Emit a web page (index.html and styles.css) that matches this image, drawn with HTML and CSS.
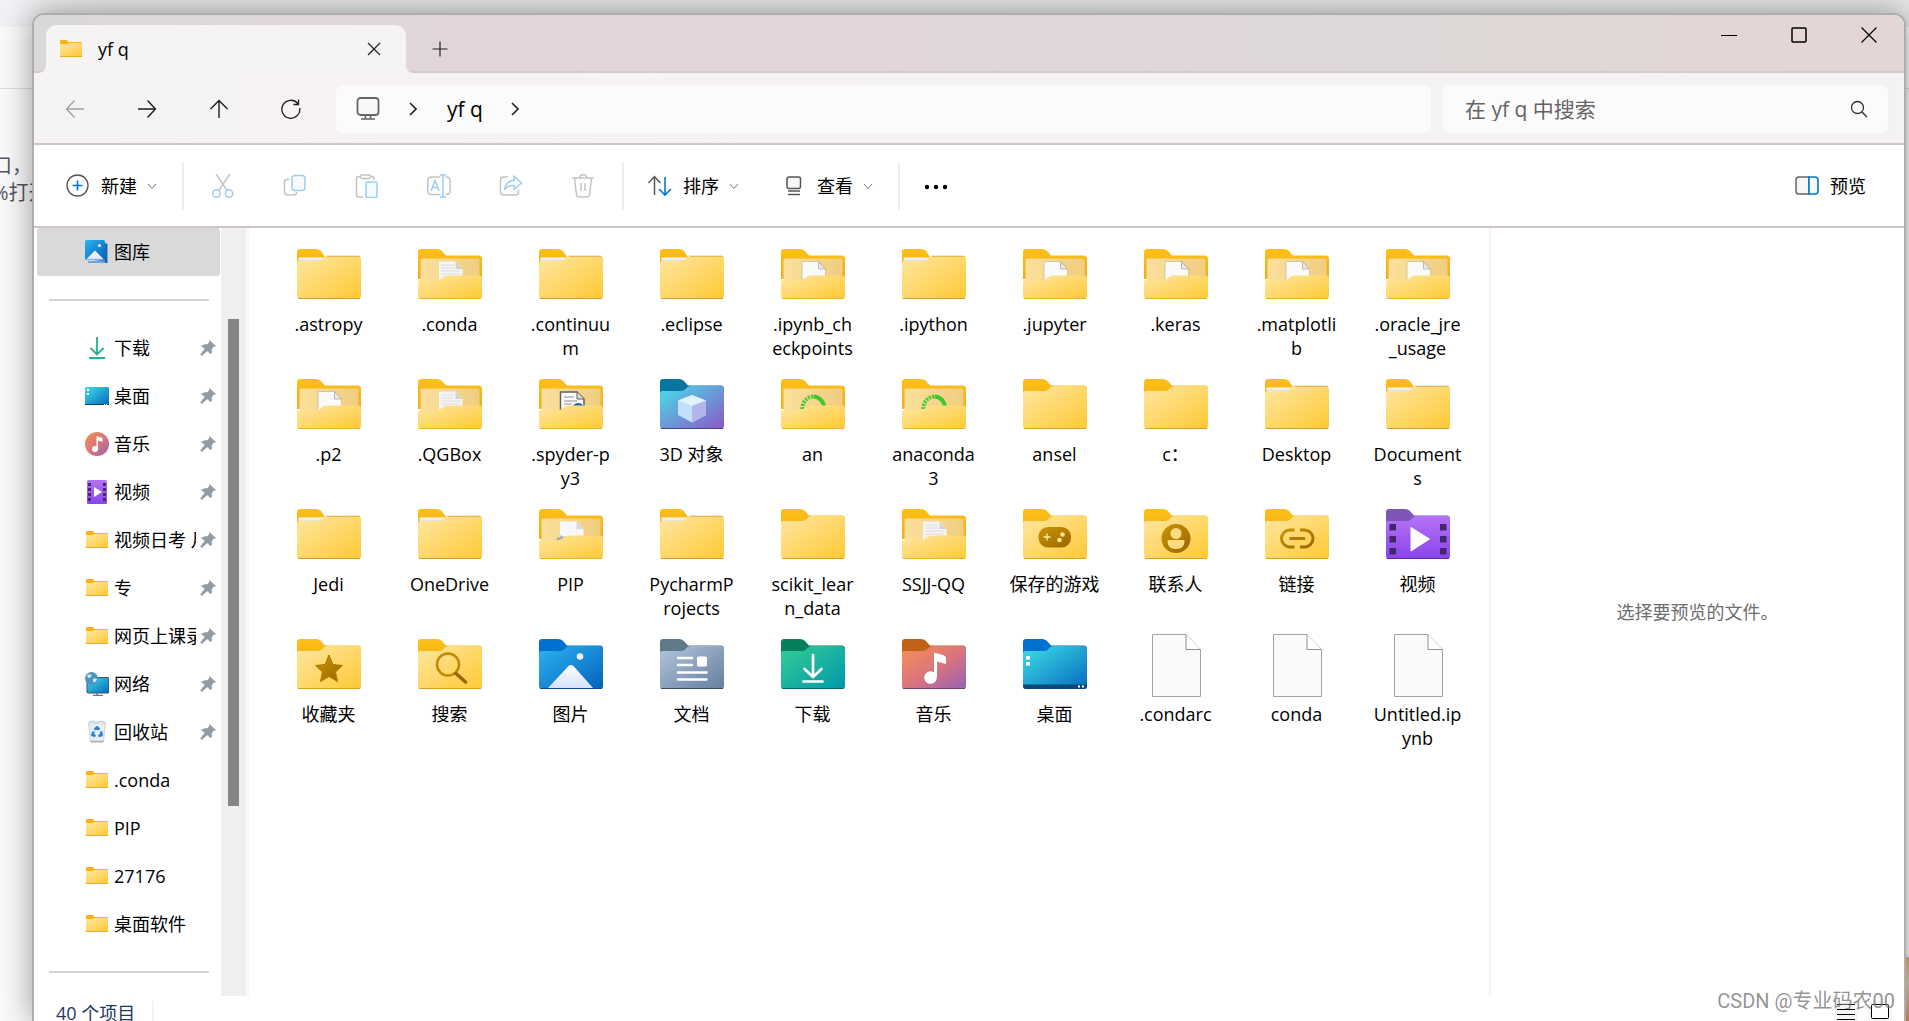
FILE: index.html
```html
<!DOCTYPE html>
<html lang="zh-CN">
<head>
    <meta charset="UTF-8">
    <meta name="viewport" content="width=device-width, initial-scale=1.0">
    <title>yf q</title>
    <link rel="stylesheet" href="styles.css">
</head>
<body>
    <!-- shared gradients and icons -->
    <svg class="defs" aria-hidden="true">
        <defs>
            <linearGradient id="gFront" x1="0" y1="0" x2="1" y2="1"><stop offset="0" stop-color="#ffe7a2"/><stop offset="1" stop-color="#ffc934"/></linearGradient>
            <linearGradient id="gTab" x1="0" y1="0" x2="0" y2="1"><stop offset="0" stop-color="#fdc016"/><stop offset="1" stop-color="#f0ae1c"/></linearGradient>
            <linearGradient id="gInner" x1="0" y1="0" x2="1" y2="0"><stop offset="0" stop-color="#fbe09c"/><stop offset="1" stop-color="#f0cd80"/></linearGradient>
            <linearGradient id="gGold" x1="0" y1="0" x2="1" y2="1"><stop offset="0" stop-color="#c99700"/><stop offset="1" stop-color="#9d6400"/></linearGradient>
            <linearGradient id="g3d" x1="0" y1="0" x2="1" y2="1"><stop offset="0" stop-color="#45e0e8"/><stop offset=".5" stop-color="#6a9ad8"/><stop offset="1" stop-color="#8b57c6"/></linearGradient>
            <linearGradient id="gPic" x1="0" y1="0" x2="1" y2="1"><stop offset="0" stop-color="#2cb4f2"/><stop offset="1" stop-color="#0460ba"/></linearGradient>
            <linearGradient id="gHill" x1="0" y1="0" x2="0" y2="1"><stop offset="0" stop-color="#ffffff"/><stop offset="1" stop-color="#d6e0fb"/></linearGradient>
            <linearGradient id="gDoc" x1="0" y1="0" x2="1" y2="1"><stop offset="0" stop-color="#b3c5dc"/><stop offset="1" stop-color="#647f9f"/></linearGradient>
            <linearGradient id="gDown" x1="0" y1="0" x2="1" y2="1"><stop offset="0" stop-color="#34cd94"/><stop offset="1" stop-color="#0098ab"/></linearGradient>
            <linearGradient id="gMusic" x1="0" y1="0" x2="1" y2="1"><stop offset="0" stop-color="#fb8f55"/><stop offset=".55" stop-color="#d6737f"/><stop offset="1" stop-color="#9462b8"/></linearGradient>
            <linearGradient id="gDesk" x1="0" y1="0" x2="1" y2="1"><stop offset="0" stop-color="#3ce0e6"/><stop offset="1" stop-color="#0769c0"/></linearGradient>
            <linearGradient id="gVideo" x1="0" y1="0" x2="0" y2="1"><stop offset="0" stop-color="#b673f5"/><stop offset="1" stop-color="#8844ea"/></linearGradient>
            <linearGradient id="gPaper" x1="0" y1="0" x2="0" y2="1"><stop offset="0" stop-color="#fbfbfb"/><stop offset="1" stop-color="#d9d9d9"/></linearGradient>

            <path id="front" d="M0 14Q0 12 2 12H21Q24 12 26 9.500Q27.500 7 31 7H61Q64 7 64 10V47Q64 50 61 50H3Q0 50 0 47Z"/>
            <path id="tab" d="M0 3Q0 0 3 0H19Q22 0 24 2L28 6.500H61Q64 6.500 64 10V30H0Z"/>

            <symbol id="plain" viewBox="0 0 64 64">
                <g transform="translate(0 5)">
                    <use href="#tab" fill="url(#gTab)"/>
                    <use href="#front" fill="url(#gFront)"/>
                    <path d="M1 49.500H63" stroke="#d99f25"/>
                </g>
            </symbol>
            <symbol id="filled" viewBox="0 0 64 64">
                <g transform="translate(0 5)">
                    <path d="M0 3Q0 0 3 0H19Q22 0 24 2L28 8V20H0Z" fill="url(#gTab)"/>
                    <path d="M28 7L30 6H62V9H28Z" fill="#e6e6ea"/>
                    <path d="M1.500 9.500Q1.500 8.500 3 8.500H28L25 13H1.500Z" fill="url(#gPaper)"/>
                    <use href="#front" fill="url(#gFront)"/>
                    <path d="M30 7.500H63" stroke="#e5b954"/>
                    <path d="M1 49.500H63" stroke="#cf9a2c"/>
                </g>
            </symbol>
            <symbol id="openBack" viewBox="0 0 64 64">
                <g transform="translate(0 5)">
                    <use href="#tab" fill="url(#gTab)"/>
                    <path d="M2.500 11Q2.500 9.500 4 9.500H60Q61.500 9.500 61.500 11V40H2.500Z" fill="url(#gInner)"/>
                </g>
            </symbol>
            <symbol id="openFront" viewBox="0 0 64 64">
                <g transform="translate(0 5)">
                    <path d="M0 33Q0 31 2 31H19Q22 31 24.500 28.500Q27 26.500 30 26.500H62Q64 26.500 64 29V47Q64 50 61 50H3Q0 50 0 47Z" fill="url(#gFront)"/>
                    <path d="M1 49.500H63" stroke="#eeb02b"/>
                </g>
            </symbol>
            <symbol id="openBlank" viewBox="0 0 64 64">
                <use href="#openBack"/>
                <path d="M21 17.500H37.500L44.500 25V37H21Z" fill="#fafafa" stroke="#d9c699"/>
                <path d="M37.500 17.500V25H44.500Z" fill="#e9e9e9" stroke="#a8a090" stroke-width=".7"/>
                <use href="#openFront"/>
            </symbol>
            <symbol id="openText" viewBox="0 0 64 64">
                <use href="#openBack"/>
                <path d="M21 17.500H37.500L44.500 25V37H21Z" fill="#f5f5f5"/>
                <path d="M37.500 17.500V25H44.500Z" fill="#d3d3d3"/>
                <path d="M23 21H36M23 24H36M23 27H42M23 30H42" stroke="#dcdcdc"/>
                <use href="#openFront"/>
            </symbol>
            <symbol id="openSpyder" viewBox="0 0 64 64">
                <use href="#openBack"/>
                <path d="M21.500 18H38L45 25V37H21.500Z" fill="#fbfbfb" stroke="#5f5f5f" stroke-width="1.500"/>
                <path d="M38 18V25H45" fill="#ddd" stroke="#5f5f5f"/>
                <path d="M25 23H35M25 27H38M25 30H33" stroke="#8c8c8c"/>
                <path d="M33 34Q35 28.500 40 29Q44 29.500 45 34Z" fill="#2a6aa8"/>
                <use href="#openFront"/>
            </symbol>
            <symbol id="openPip" viewBox="0 0 64 64">
                <use href="#openBack"/>
                <path d="M21 17.500H37.500L44.500 25V37H21Z" fill="#f6f8fb"/>
                <path d="M37.500 17.500V25H44.500Z" fill="#d5d9df"/>
                <path d="M17 36L19 33L21 34L22 31L24 33L27 32V36Z" fill="#9aaabb"/>
                <use href="#openFront"/>
            </symbol>
            <symbol id="openConda" viewBox="0 0 64 64">
                <use href="#openBack"/>
                <path d="M32.500 22.500A11 11 0 0 1 43 33" fill="none" stroke="#3fc92c" stroke-width="4"/>
                <path d="M21.500 35A11.500 11.500 0 0 1 32 22.500" fill="none" stroke="#43cd30" stroke-width="4" stroke-dasharray="2 1.200"/>
                <use href="#openFront"/>
            </symbol>
            <symbol id="star" viewBox="0 0 64 64">
                <use href="#plain"/>
                <path d="M32 21L36 30.500L45.500 31.500L38.500 38L40.500 47.500L32 42.500L23.500 47.500L25.500 38L18.500 31.500L28 30.500Z" fill="url(#gGold)" stroke="#b07a00" stroke-linejoin="round"/>
            </symbol>
            <symbol id="lens" viewBox="0 0 64 64">
                <use href="#plain"/>
                <circle cx="30" cy="30.500" r="11" fill="none" stroke="#bd8a00" stroke-width="2.500"/>
                <path d="M38 39.500L47.500 48" stroke="#9d6400" stroke-width="3.500" stroke-linecap="round"/>
            </symbol>
            <symbol id="game" viewBox="0 0 64 64">
                <use href="#plain"/>
                <rect x="15.500" y="23" width="32.500" height="20.500" rx="9.500" fill="url(#gGold)"/>
                <path d="M24 29.500V36.500M20.500 33H27.500" stroke="#ffe9ab" stroke-width="1.300"/>
                <circle cx="39.500" cy="30.500" r="2.300" fill="#ffe49a"/>
                <circle cx="36.500" cy="36" r="2.300" fill="#ffe49a"/>
            </symbol>
            <symbol id="person" viewBox="0 0 64 64">
                <use href="#plain"/>
                <circle cx="32" cy="34.500" r="14.500" fill="url(#gGold)"/>
                <circle cx="32" cy="29.500" r="5.500" fill="#ffdc80"/>
                <path d="M23.500 36H40.500Q41 45 32 45Q23 45 23.500 36Z" fill="#ffdc80"/>
            </symbol>
            <symbol id="link" viewBox="0 0 64 64">
                <use href="#plain"/>
                <path d="M29.500 26H25A8.500 8.500 0 0 0 25 43H29.500M35 26H39.500A8.500 8.500 0 0 1 39.500 43H35" fill="none" stroke="url(#gGold)" stroke-width="3"/>
                <path d="M25.500 34.500H39" stroke="#b37e00" stroke-width="3" stroke-linecap="round"/>
            </symbol>
            <symbol id="cube" viewBox="0 0 64 64">
                <g transform="translate(0 5)">
                    <use href="#tab" fill="#08749f"/>
                    <use href="#front" fill="url(#g3d)"/>
                    <path d="M1 49.500H63" stroke="#40408c"/>
                </g>
                <path d="M32 21L46 26.500V41L32 48.500L18 41V26.500Z" fill="#bfe0f6"/>
                <path d="M32 21L46 26.500L32 32L18 26.500Z" fill="#e2f1fb"/>
                <path d="M32 32L46 26.500V41L32 48.500Z" fill="#b4b3ee"/>
            </symbol>
            <symbol id="videos" viewBox="0 0 64 64">
                <g transform="translate(0 5)">
                    <use href="#tab" fill="#7f56b8"/>
                    <use href="#front" fill="url(#gVideo)"/>
                    <path d="M1 49.500H63" stroke="#5d2ba6"/>
                </g>
                <path d="M3.500 20h6.500v6.500h-6.500zM3.500 32h6.500v6.500h-6.500zM3.500 44h6.500v6.500h-6.500zM54 20h6.500v6.500h-6.500zM54 32h6.500v6.500h-6.500zM54 44h6.500v6.500h-6.500z" fill="#43276e"/>
                <path d="M25 23.500L43.500 35L25 47Z" fill="#fff" stroke="#fff" stroke-linejoin="round"/>
            </symbol>
            <symbol id="pictures" viewBox="0 0 64 64">
                <g transform="translate(0 5)">
                    <use href="#tab" fill="#0270cf"/>
                    <use href="#front" fill="url(#gPic)"/>
                    <path d="M9 49L29.500 27Q32 25 34.500 27L54 49Z" fill="url(#gHill)"/>
                    <circle cx="41" cy="17.500" r="3.300" fill="#f0eef2"/>
                    <path d="M1 49.500H63" stroke="#064a92"/>
                </g>
            </symbol>
            <symbol id="docs" viewBox="0 0 64 64">
                <g transform="translate(0 5)">
                    <use href="#tab" fill="#607b88"/>
                    <use href="#front" fill="url(#gDoc)"/>
                    <path d="M1 49.500H63" stroke="#3e5068"/>
                </g>
                <path d="M18 24H32M18 31H32M18 38.500H46.500M18 45.500H46.500" stroke="#fff" stroke-width="2.500" stroke-linecap="round"/>
                <rect x="37" y="22.500" width="10" height="10" rx="1.500" fill="#fff"/>
            </symbol>
            <symbol id="downloads" viewBox="0 0 64 64">
                <g transform="translate(0 5)">
                    <use href="#tab" fill="#04805d"/>
                    <use href="#front" fill="url(#gDown)"/>
                    <path d="M1 49.500H63" stroke="#056a72"/>
                </g>
                <path d="M32 21V42M23.500 35L32 43L40.500 35M22.500 47.500H41.500" fill="none" stroke="#fff" stroke-width="2.700" stroke-linecap="round"/>
            </symbol>
            <symbol id="music" viewBox="0 0 64 64">
                <g transform="translate(0 5)">
                    <use href="#tab" fill="#c06316"/>
                    <use href="#front" fill="url(#gMusic)"/>
                    <path d="M1 49.500H63" stroke="#74406f"/>
                </g>
                <path d="M32 18.500L41 21Q44 22 44 24V30L35 27.500V43H32Z" fill="#fff"/>
                <circle cx="28.500" cy="43.500" r="6.300" fill="#fff"/>
            </symbol>
            <symbol id="desktop" viewBox="0 0 64 64">
                <g transform="translate(0 5)">
                    <use href="#tab" fill="#0270cf"/>
                    <use href="#front" fill="url(#gDesk)"/>
                    <path d="M0 45.500H64V47Q64 50 61 50H3Q0 50 0 47Z" fill="#0b4a78"/>
                    <path d="M3 17h4v3.500h-4zM3 23h4v3.500h-4zM55 46.500h2v2h-2zM59 46.500h2v2h-2z" fill="#fff"/>
                </g>
            </symbol>
            <symbol id="file" viewBox="0 0 64 64">
                <path d="M8.500 .5H42L56.500 15.500V62.500H8.500Z" fill="#fafafa" stroke="#a3a3a3"/>
                <path d="M42 .5V15.500H56.500" fill="#fff" stroke="#8f8f8f"/>
            </symbol>

            <symbol id="smallFolder" viewBox="0 0 24 24">
                <path d="M1 4Q1 3 2 3H8L9 5H23V19H1Z" fill="#fab515"/>
                <path d="M1 7H9L10 6H23V19H1Z" fill="url(#gFront)"/>
                <path d="M1 19.500H23" stroke="#eeaa22"/>
            </symbol>
            <symbol id="pin" viewBox="0 0 16 16">
                <path d="M9.500 .5L15.500 6Q13 6 11.500 9Q12 12 11 14L7.200 10.800L2 15.500L.5 14.500L5 9L1.500 6Q4.500 4 7 4.500Q10 3.500 9.500 .5Z" fill="#909ba1" stroke="#909ba1" stroke-width=".6" stroke-linejoin="round"/>
            </symbol>
            <symbol id="chev" viewBox="0 0 12 12"><path d="M2 4L6 8.500L10 4" fill="none" stroke="#777"/></symbol>
        </defs>
    </svg>

    <!-- page that lies behind the window -->
    <div class="backdrop">
        <div class="backdrop-bar"></div>
        <div class="backdrop-head"></div>
        <p class="backdrop-text">口，<br>%打开</p>
        <div class="backdrop-art"></div>
    </div>

    <div class="window">
        <header class="titlebar">
            <div class="tab">
                <svg class="icon24"><use href="#smallFolder"/></svg>
                <span class="tab-title">yf q</span>
                <button class="tab-close" aria-label="关闭标签页"><svg width="14" height="14" viewBox="0 0 14 14"><path d="M1 1L13 13M13 1L1 13" stroke="#222" stroke-width="1.200"/></svg></button>
            </div>
            <button class="tab-add" aria-label="新建标签页"><svg width="16" height="16" viewBox="0 0 16 16"><path d="M8 .5V15.500M.5 8H15.500" stroke="#222" stroke-width="1.200"/></svg></button>
            <div class="win-controls">
                <button aria-label="最小化"><svg width="16" height="16" viewBox="0 0 16 16"><path d="M0 8.500H16" stroke="#000"/></svg></button>
                <button aria-label="最大化"><svg width="16" height="16" viewBox="0 0 16 16"><rect x="1" y="1" width="14" height="14" rx="1" fill="none" stroke="#000" stroke-width="1.500"/></svg></button>
                <button aria-label="关闭"><svg width="16" height="16" viewBox="0 0 16 16"><path d="M.5 .5L15.500 15.500M15.500 .5L.5 15.500" stroke="#000" stroke-width="1.200"/></svg></button>
            </div>
        </header>

        <nav class="navbar">
            <div class="nav-buttons">
                <button aria-label="后退" disabled><svg width="20" height="20" viewBox="0 0 20 20"><path d="M19 10H1.500M9.500 1.500L1.500 10L9.500 18.500" fill="none" stroke="#a3a1a2" stroke-width="1.400"/></svg></button>
                <button aria-label="前进"><svg width="20" height="20" viewBox="0 0 20 20"><path d="M1 10H18.500M10.500 1.500L18.500 10L10.500 18.500" fill="none" stroke="#1c1c1c" stroke-width="1.400"/></svg></button>
                <button aria-label="向上"><svg width="20" height="20" viewBox="0 0 20 20"><path d="M10 19V1.500M1.500 10L10 1.500L18.500 10" fill="none" stroke="#1c1c1c" stroke-width="1.400"/></svg></button>
                <button aria-label="刷新"><svg width="20" height="20" viewBox="0 0 20 20"><path d="M16.800 4.500A9 9 0 1 0 18.800 9M17.500 .5V5.500H12.500" fill="none" stroke="#1c1c1c" stroke-width="1.300"/></svg></button>
            </div>
            <div class="address">
                <svg width="24" height="24" viewBox="0 0 24 24"><rect x="1.500" y="1" width="21" height="17" rx="3" fill="#f8f8f8" stroke="#666" stroke-width="1.800"/><path d="M9.500 18V21.500M14.500 18V21.500M5 22H19" stroke="#666" stroke-width="1.600"/></svg>
                <svg class="crumb" width="8" height="14" viewBox="0 0 8 14"><path d="M1 1L7 7L1 13" fill="none" stroke="#222" stroke-width="1.600"/></svg>
                <a class="crumb-link" href="#">yf q</a>
                <svg width="8" height="14" viewBox="0 0 8 14"><path d="M1 1L7 7L1 13" fill="none" stroke="#222" stroke-width="1.600"/></svg>
            </div>
            <div class="search">
                <input type="text" placeholder="在 yf q 中搜索" aria-label="在 yf q 中搜索">
                <svg width="18" height="18" viewBox="0 0 18 18"><circle cx="7.500" cy="7.500" r="6" fill="none" stroke="#333" stroke-width="1.300"/><path d="M12 12L17 17" stroke="#333" stroke-width="1.500"/></svg>
            </div>
        </nav>

        <div class="toolbar">
            <button class="tool">
                <svg class="icon24"><circle cx="11.500" cy="11.500" r="10.500" fill="none" stroke="#555" stroke-width="1.300"/><path d="M11.500 6.500V16.500M6.500 11.500H16.500" stroke="#0078d4" stroke-width="1.600"/></svg>
                <span>新建</span>
                <svg class="chev"><use href="#chev"/></svg>
            </button>
            <div class="sep"></div>
            <div class="icon-tools">
                <button aria-label="剪切" disabled><svg class="icon24"><path d="M5 0L16 16M19 0L8 16" stroke="#c3c3c3" stroke-width="1.400"/><circle cx="5.500" cy="19.500" r="3.700" fill="#fff" stroke="#9ccdf3" stroke-width="1.500"/><circle cx="18" cy="19.500" r="3.700" fill="#fff" stroke="#9ccdf3" stroke-width="1.500"/></svg></button>
                <button aria-label="复制" disabled><svg class="icon24"><path d="M6.500 5.500H4Q1.500 5.500 1.500 8V18Q1.500 21 4.500 21H11Q13.500 21 13.800 18" fill="none" stroke="#c3c3c3" stroke-width="1.500"/><rect x="9" y="1.500" width="13" height="15" rx="3" fill="#f7fbff" stroke="#9ccdf3" stroke-width="1.500"/></svg></button>
                <button aria-label="粘贴" disabled><svg class="icon24"><path d="M6 2.500H4Q1.500 2.500 1.500 5V20.500Q1.500 23 4 23H8M14 2.500H17Q19 2.500 19 5V6" fill="none" stroke="#c3c3c3" stroke-width="1.500"/><rect x="5.500" y="1" width="10" height="3.500" rx="1.700" fill="#fff" stroke="#c3c3c3" stroke-width="1.500"/><rect x="11" y="8" width="11" height="15.500" rx="1.500" fill="#f7fbff" stroke="#9ccdf3" stroke-width="1.500"/></svg></button>
                <button aria-label="重命名" disabled><svg class="icon24"><path d="M13.500 3H4.500Q.8 3 .8 6.500V17Q.8 20.500 4.500 20.500H13.500M18.500 3H19Q23 3 23 6.500V17Q23 20.500 19 20.500H18.500" fill="none" stroke="#c3c3c3" stroke-width="1.500"/><path d="M4 17L8 6.500L12 17M5.500 13.500H10.500M16 1V23M13 1H19M13 23H19" fill="none" stroke="#9ccdf3" stroke-width="1.500"/></svg></button>
                <button aria-label="共享" disabled><svg class="icon24"><path d="M9 3H4.500Q1.500 3 1.500 6V18Q1.500 21 4.500 21H16.500Q19.500 21 19.500 18V16" fill="none" stroke="#c3c3c3" stroke-width="1.500"/><path d="M5.500 15.500Q7 6.500 15 6.500V2L22.500 9L15 15.500V11.500Q9 11 5.500 15.500Z" fill="#f7fbff" stroke="#9ccdf3" stroke-width="1.500" stroke-linejoin="round"/></svg></button>
                <button aria-label="删除" disabled><svg class="icon24"><path d="M1 4H23M8.500 4Q8.500 .8 12 .8Q15.500 .8 15.500 4M3.500 4L5.500 21Q5.800 23 8 23H16Q18.200 23 18.500 21L20.500 4M10 9V17M14 9V17" fill="none" stroke="#c3c3c3" stroke-width="1.500"/></svg></button>
            </div>
            <div class="sep"></div>
            <button class="tool">
                <svg class="icon24"><path d="M6.500 21V3M.5 9L6.500 2.500L12.500 9" fill="none" stroke="#555" stroke-width="1.500"/><path d="M17 3V21M11 15L17 21L23 15" fill="none" stroke="#0078d4" stroke-width="1.600"/></svg>
                <span>排序</span>
                <svg class="chev"><use href="#chev"/></svg>
            </button>
            <button class="tool">
                <svg class="icon24"><rect x="5" y="3" width="13.500" height="11.500" rx="2" fill="#f6f6f6" stroke="#555" stroke-width="1.500"/><path d="M6 17H18M6 20.500H18" stroke="#555" stroke-width="1.500"/></svg>
                <span>查看</span>
                <svg class="chev"><use href="#chev"/></svg>
            </button>
            <div class="sep"></div>
            <button class="tool" aria-label="查看更多"><svg class="icon24"><circle cx="3" cy="13" r="2.200"/><circle cx="12" cy="13" r="2.200"/><circle cx="21" cy="13" r="2.200"/></svg></button>
            <button class="tool preview-toggle">
                <svg class="icon24"><path d="M14 3H4Q1 3 1 6V17Q1 20 4 20H14Z" fill="#f6f6f6" stroke="#666" stroke-width="1.500"/><path d="M14 3H20Q23 3 23 6V17Q23 20 20 20H14Z" fill="#f4faff" stroke="#0078d4" stroke-width="1.600"/></svg>
                <span>预览</span>
            </button>
        </div>

        <div class="content">
            <aside class="sidebar">
                <ul class="places">
                    <li><a class="place selected" href="#"><svg class="icon24"><path d="M3 21.500Q3 23 5 23H22.500V4L20 3V20Z" fill="#1a66b5"/><path d="M3 22H20" stroke="#6fa3dc" stroke-width="2"/><rect width="20" height="20" rx="1.500" fill="url(#gPic)"/><path d="M1 19.500L10 10.500L19 19.500Z" fill="url(#gHill)"/><circle cx="14.500" cy="5.500" r="1.500" fill="#fff"/></svg><span>图库</span></a></li>
                    <li class="rule"></li>
                    <li><a class="place" href="#"><svg class="icon24"><path d="M12 1V18M5.500 12L12 18.500L18.500 12M4 22H20" fill="none" stroke="#1fb38e" stroke-width="1.800"/></svg><span>下载</span><svg class="pin"><use href="#pin"/></svg></a></li>
                    <li><a class="place" href="#"><svg class="icon24"><rect y="3" width="24" height="18" rx="1" fill="url(#gDesk)"/><path d="M0 20.500H24" stroke="#0b3f6c"/><path d="M2 5h2v2h-2zM2 9h2v2h-2zM19 20h1v1h-1zM21 20h1v1h-1z" fill="#fff"/></svg><span>桌面</span><svg class="pin"><use href="#pin"/></svg></a></li>
                    <li><a class="place" href="#"><svg class="icon24"><circle cx="12" cy="12" r="12" fill="url(#gMusic)"/><circle cx="10" cy="17" r="3" fill="#fff"/><path d="M11.500 4L17.500 6V10L13 8.500V17H11.500Z" fill="#fff"/></svg><span>音乐</span><svg class="pin"><use href="#pin"/></svg></a></li>
                    <li><a class="place" href="#"><svg class="icon24"><rect x="2" width="20" height="24" rx="1.500" fill="url(#gVideo)"/><path d="M3 3h3v3h-3zM3 8h3v3h-3zM3 13h3v3h-3zM3 18h3v3h-3zM18 3h3v3h-3zM18 8h3v3h-3zM18 13h3v3h-3zM18 18h3v3h-3z" fill="#452a70"/><path d="M9 7L17 12L9 17Z" fill="#fff"/></svg><span>视频</span><svg class="pin"><use href="#pin"/></svg></a></li>
                    <li><a class="place" href="#"><svg class="icon24"><use href="#smallFolder"/></svg><span>视频日考 月</span><svg class="pin"><use href="#pin"/></svg></a></li>
                    <li><a class="place" href="#"><svg class="icon24"><use href="#smallFolder"/></svg><span>专</span><svg class="pin"><use href="#pin"/></svg></a></li>
                    <li><a class="place" href="#"><svg class="icon24"><use href="#smallFolder"/></svg><span>网页上课录</span><svg class="pin"><use href="#pin"/></svg></a></li>
                    <li><a class="place" href="#"><svg class="icon24"><rect x="2" y="5.500" width="22" height="15.500" rx="1" fill="url(#gDesk)" stroke="#37536b"/><path d="M12 21V23M8 23.500H18" stroke="#6b7680" stroke-width="1.500"/><circle cx="6.500" cy="6.500" r="6.500" fill="#4c93c4"/><path d="M2 3Q6 1 7 4Q5 6 3 6ZM8 7Q12 5 12 8Q10 11 8 10ZM9 2L12 4Z" fill="#cfe6f3"/></svg><span>网络</span><svg class="pin"><use href="#pin"/></svg></a></li>
                    <li><a class="place" href="#"><svg class="icon24"><path d="M3.500 3H20.500L18.500 22H5.500Z" fill="#e9edf0" stroke="#cdd4d9"/><path d="M4 2L8 1L11 2.500L16 1L20 2.500" fill="none" stroke="#b5bdc4"/><path d="M5.500 21.500H18.500" stroke="#a7afb6" stroke-width="1.500"/><path d="M9.500 9.500L12 7.500L14.500 9.500M16 11.500L16.500 15L13.500 16M10.500 16L7.500 15L8.500 11.500" fill="none" stroke="#2284d6" stroke-width="2.600"/></svg><span>回收站</span><svg class="pin"><use href="#pin"/></svg></a></li>
                    <li><a class="place" href="#"><svg class="icon24"><use href="#smallFolder"/></svg><span>.conda</span></a></li>
                    <li><a class="place" href="#"><svg class="icon24"><use href="#smallFolder"/></svg><span>PIP</span></a></li>
                    <li><a class="place" href="#"><svg class="icon24"><use href="#smallFolder"/></svg><span>27176</span></a></li>
                    <li><a class="place" href="#"><svg class="icon24"><use href="#smallFolder"/></svg><span>桌面软件</span></a></li>
                    <li class="rule"></li>
                </ul>
                <div class="scrollbar"><div class="thumb"></div></div>
            </aside>

            <main class="files">
                <a class="item" href="#"><svg><use href="#filled"/></svg><span>.astropy</span></a>
                <a class="item" href="#"><svg><use href="#openText"/></svg><span>.conda</span></a>
                <a class="item" href="#"><svg><use href="#filled"/></svg><span>.continuu<br>m</span></a>
                <a class="item" href="#"><svg><use href="#filled"/></svg><span>.eclipse</span></a>
                <a class="item" href="#"><svg><use href="#openBlank"/></svg><span>.ipynb_ch<br>eckpoints</span></a>
                <a class="item" href="#"><svg><use href="#filled"/></svg><span>.ipython</span></a>
                <a class="item" href="#"><svg><use href="#openBlank"/></svg><span>.jupyter</span></a>
                <a class="item" href="#"><svg><use href="#openBlank"/></svg><span>.keras</span></a>
                <a class="item" href="#"><svg><use href="#openBlank"/></svg><span>.matplotli<br>b</span></a>
                <a class="item" href="#"><svg><use href="#openBlank"/></svg><span>.oracle_jre<br>_usage</span></a>

                <a class="item" href="#"><svg><use href="#openBlank"/></svg><span>.p2</span></a>
                <a class="item" href="#"><svg><use href="#openText"/></svg><span>.QGBox</span></a>
                <a class="item" href="#"><svg><use href="#openSpyder"/></svg><span>.spyder-p<br>y3</span></a>
                <a class="item" href="#"><svg><use href="#cube"/></svg><span>3D 对象</span></a>
                <a class="item" href="#"><svg><use href="#openConda"/></svg><span>an</span></a>
                <a class="item" href="#"><svg><use href="#openConda"/></svg><span>anaconda<br>3</span></a>
                <a class="item" href="#"><svg><use href="#plain"/></svg><span>ansel</span></a>
                <a class="item" href="#"><svg><use href="#plain"/></svg><span>c：</span></a>
                <a class="item" href="#"><svg><use href="#filled"/></svg><span>Desktop</span></a>
                <a class="item" href="#"><svg><use href="#filled"/></svg><span>Document<br>s</span></a>

                <a class="item" href="#"><svg><use href="#filled"/></svg><span>Jedi</span></a>
                <a class="item" href="#"><svg><use href="#filled"/></svg><span>OneDrive</span></a>
                <a class="item" href="#"><svg><use href="#openPip"/></svg><span>PIP</span></a>
                <a class="item" href="#"><svg><use href="#filled"/></svg><span>PycharmP<br>rojects</span></a>
                <a class="item" href="#"><svg><use href="#plain"/></svg><span>scikit_lear<br>n_data</span></a>
                <a class="item" href="#"><svg><use href="#openText"/></svg><span>SSJJ-QQ</span></a>
                <a class="item" href="#"><svg><use href="#game"/></svg><span>保存的游戏</span></a>
                <a class="item" href="#"><svg><use href="#person"/></svg><span>联系人</span></a>
                <a class="item" href="#"><svg><use href="#link"/></svg><span>链接</span></a>
                <a class="item" href="#"><svg><use href="#videos"/></svg><span>视频</span></a>

                <a class="item" href="#"><svg><use href="#star"/></svg><span>收藏夹</span></a>
                <a class="item" href="#"><svg><use href="#lens"/></svg><span>搜索</span></a>
                <a class="item" href="#"><svg><use href="#pictures"/></svg><span>图片</span></a>
                <a class="item" href="#"><svg><use href="#docs"/></svg><span>文档</span></a>
                <a class="item" href="#"><svg><use href="#downloads"/></svg><span>下载</span></a>
                <a class="item" href="#"><svg><use href="#music"/></svg><span>音乐</span></a>
                <a class="item" href="#"><svg><use href="#desktop"/></svg><span>桌面</span></a>
                <a class="item" href="#"><svg><use href="#file"/></svg><span>.condarc</span></a>
                <a class="item" href="#"><svg><use href="#file"/></svg><span>conda</span></a>
                <a class="item" href="#"><svg><use href="#file"/></svg><span>Untitled.ip<br>ynb</span></a>
            </main>

            <section class="preview">选择要预览的文件。</section>
        </div>

        <footer class="statusbar">
            <span class="count">40 个项目</span>
            <div class="views">
                <button aria-label="详细信息"><svg width="18" height="18" viewBox="0 0 18 18"><path d="M0 1.500H18M0 6.500H18M0 11.500H18M0 16.500H18" stroke="#000"/></svg></button>
                <button aria-label="大图标"><svg width="18" height="18" viewBox="0 0 18 18"><rect x=".5" y="1.500" width="17" height="14" rx="1" fill="#fff" stroke="#000"/></svg></button>
            </div>
        </footer>
    </div>

    <div class="watermark">CSDN @专业码农00</div>
</body>
</html>
```

FILE: styles.css
```css
* {
    box-sizing: border-box;
}
body {
    margin: 0;
    height: 100vh;
    overflow: hidden;
    background: #fff;
    font-family: "Open Sans", "Noto Sans CJK SC", sans-serif;
    font-size: 18px;
    line-height: 24px;
    color: #000;
}
a {
    color: inherit;
    text-decoration: none;
}
button {
    display: flex;
    align-items: center;
    justify-content: center;
    padding: 0;
    border: none;
    background: none;
    font: inherit;
    color: inherit;
}
svg {
    display: block;
    flex: none;
}
.defs {
    position: absolute;
    width: 0;
    height: 0;
}
.icon24 {
    width: 24px;
    height: 24px;
}

/* page behind */
.backdrop {
    position: absolute;
    inset: 0;
    overflow: hidden;
    background: #fafafa;
}
.backdrop-bar {
    height: 27px;
    background: linear-gradient(90deg, #f0f2f5, #e8eae9 6%, #e8eae8);
}
.backdrop-head {
    height: 62px;
    border-bottom: 1px solid #ddd;
}
.backdrop-text {
    position: absolute;
    top: 152px;
    left: -8px;
    margin: 0;
    font-size: 20px;
    line-height: 27px;
    color: #555666;
    white-space: nowrap;
}
.backdrop-art {
    position: absolute;
    right: 0;
    bottom: 0;
    width: 6px;
    height: 64px;
    background: linear-gradient(#e0b873, #e6cdb0 40%, #e0bd98 60%, #d9824f);
}

/* window */
.window {
    position: relative;
    display: flex;
    flex-direction: column;
    height: calc(100vh - 13px);
    margin: 13px 3px 0 32px;
    border: 2px solid #adadad;
    border-bottom: none;
    border-radius: 12px 12px 0 0;
    overflow: hidden;
    background: #fff;
    box-shadow: 0 0 32px rgba(0, 0, 0, 0.4);
}
.titlebar {
    display: flex;
    align-items: flex-end;
    height: 58px;
    padding-left: 12px;
    background: linear-gradient(90deg, #dad8db, #e3d5d9 28%, #e1d6da 50%, #ddd8d8 73%, #e3d6d4 94%);
    box-shadow: inset 0 -2px 0 #d6c9cd;
}
.tab {
    position: relative;
    display: flex;
    align-items: center;
    width: 360px;
    height: 48px;
    padding: 0 22px 0 13px;
    border-radius: 11px 11px 0 0;
    background: #f5f3f4;
}
.tab::before,
.tab::after {
    content: "";
    position: absolute;
    bottom: 0;
    width: 6px;
    height: 6px;
}
.tab::before {
    left: -6px;
    background: radial-gradient(circle at 0 0, transparent 5px, #f5f3f4 6px);
}
.tab::after {
    right: -6px;
    background: radial-gradient(circle at 100% 0, transparent 5px, #f5f3f4 6px);
}
.tab-title {
    margin-left: 15px;
}
.tab-close {
    width: 20px;
    height: 24px;
    margin-left: auto;
}
.tab-add {
    width: 68px;
    height: 48px;
}
.win-controls {
    display: flex;
    align-self: flex-start;
    margin-left: auto;
}
.win-controls button {
    width: 70px;
    height: 40px;
}

/* navigation */
.navbar {
    display: flex;
    align-items: center;
    height: 72px;
    padding: 0 16px 0 5px;
    background: linear-gradient(90deg, #f5f3f4, #f7f2f3 32%, #f4f2f3 60%, #f5f3f1);
    box-shadow: inset 0 -2px 0 #cfc3c7;
}
.nav-buttons {
    display: flex;
}
.nav-buttons button {
    width: 72px;
    height: 48px;
}
.address,
.search {
    display: flex;
    align-items: center;
    height: 48px;
    border-radius: 7px;
    background: #fcfbfc;
}
.address {
    flex: 1;
    margin: 0 12px 0 9px;
    padding-left: 20px;
}
.crumb {
    margin-left: 29px;
}
.crumb-link {
    margin: 0 28px 0 30px;
    font-size: 21px;
}
.search {
    width: 445px;
    padding: 0 20px 0 22px;
}
.search input {
    flex: 1;
    min-width: 0;
    padding: 0;
    border: none;
    outline: none;
    background: none;
    font: inherit;
    font-size: 21px;
}
.search input::placeholder {
    color: #646464;
    opacity: 1;
}

/* commands */
.toolbar {
    display: flex;
    align-items: center;
    height: 83px;
    padding: 0 17px 2px 11px;
    box-shadow: inset 0 -2px 0 #cfc3c7;
}
.tool {
    height: 48px;
    padding: 0 21px;
}
.tool span {
    margin-left: 11px;
}
.chev {
    width: 12px;
    height: 12px;
    margin-left: 9px;
}
.sep {
    width: 2px;
    height: 48px;
    margin: 0 3px;
    background: #eee;
}
.icon-tools {
    display: flex;
}
.icon-tools button {
    width: 72px;
    height: 48px;
}
.preview-toggle {
    margin-left: auto;
}

/* content */
.content {
    display: flex;
    flex: 1;
    min-height: 0;
}
.sidebar {
    display: flex;
    width: 215px;
    border-right: 2px solid #f7f7f7;
}
.places {
    flex: 1;
    min-width: 0;
    margin: 0;
    padding: 0 1px 0 3px;
    list-style: none;
}
.place {
    display: flex;
    align-items: center;
    height: 48px;
    padding: 0 4px 0 48px;
    border-radius: 3px;
}
.place.selected {
    background: #d9d9d9;
}
.place span {
    flex: 1;
    min-width: 0;
    margin-left: 5px;
    overflow: hidden;
    white-space: nowrap;
}
.pin {
    width: 16px;
    height: 16px;
    margin-left: 4px;
}
.rule {
    height: 48px;
    padding: 23px 11px 0 12px;
}
.rule::before {
    content: "";
    display: block;
    height: 2px;
    background: #d5d5d5;
}
.scrollbar {
    width: 25px;
    margin-right: 1px;
    padding: 91px 7px 0;
    background: #efefef;
}
.thumb {
    height: 72%;
    background: #858585;
}
.files {
    flex: 1;
    display: grid;
    grid-template-columns: repeat(auto-fill, 121px);
    grid-auto-rows: 130px;
    align-content: start;
    padding: 16px 0 0 19px;
    overflow: hidden;
}
.item {
    display: flex;
    flex-direction: column;
    align-items: center;
    gap: 4px;
    text-align: center;
}
.item svg {
    width: 64px;
    height: 64px;
}
.preview {
    display: flex;
    align-items: center;
    justify-content: center;
    width: 415px;
    border-left: 2px solid #f5f5f5;
    color: #6d6d6d;
}

/* status bar */
.statusbar {
    display: flex;
    justify-content: space-between;
    height: 25px;
    padding: 5px 12px 0 22px;
    color: #1e395b;
    overflow: hidden;
}
.count {
    height: 24px;
    padding-right: 17px;
    border-right: 2px solid #f3f3f3;
}
.views {
    display: flex;
    gap: 10px;
}
.views button {
    align-items: flex-start;
    width: 24px;
    height: 24px;
    padding-top: 2px;
    background: #f5f5f5;
}
.watermark {
    position: absolute;
    right: 14px;
    bottom: 8px;
    font-family: Roboto, "Noto Sans CJK SC", sans-serif;
    font-size: 20px;
    color: rgba(120, 120, 120, 0.8);
}
```
